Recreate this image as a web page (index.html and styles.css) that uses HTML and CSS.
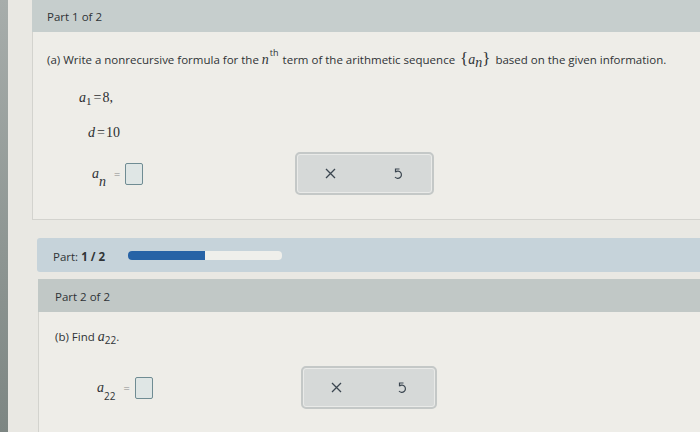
FILE: index.html
```html
<!DOCTYPE html>
<html lang="en">
<head>
    <meta charset="UTF-8">
    <meta name="viewport" content="width=device-width, initial-scale=1.0">
    <title>Arithmetic Sequences</title>
    <link rel="stylesheet" href="styles.css">
</head>
<body>
    <div class="edge"></div>
    <div class="page">

        <!-- Part 1 -->
        <div class="part part-one">
            <div class="part-head">Part 1 of 2</div>
            <div class="part-body">
                <p class="question">
                    (a) Write a nonrecursive formula for the <span class="m">n</span><sup class="th">th</sup> term of the arithmetic sequence
                    <span class="seq"><span class="brace">{</span><span class="m">a</span><sub class="m">n</sub><span class="brace">}</span></span> based on the given information.
                </p>
                <div class="given given-a1"><span class="m">a</span><sub class="num">1</sub><span class="num rel">=</span><span class="num">8,</span></div>
                <div class="given given-d"><span class="m">d</span><span class="num rel">=</span><span class="num">10</span></div>
                <div class="answer-row">
                    <div class="formula formula-an">
                        <span class="m">a</span><sub class="m low">n</sub><span class="eq">=</span><span class="answer-box"></span>
                    </div>
                    <div class="tools">
                        <button class="tool" title="Clear">
                            <svg width="11" height="11" viewBox="0 0 11 11"><path d="M1 1 L10 10 M10 1 L1 10" stroke="#3b4650" stroke-width="1.3" fill="none"/></svg>
                        </button>
                        <button class="tool" title="Undo">
                            <svg width="12" height="13" viewBox="0 0 12 13"><path d="M7.5 2 H3.5 V5.2" stroke="#3b4650" stroke-width="1.2" fill="none"/><path d="M3.5 5 A3.6 3.6 0 1 1 3 10" stroke="#3b4650" stroke-width="1.2" fill="none"/></svg>
                        </button>
                    </div>
                </div>
            </div>
        </div>

        <!-- progress -->
        <div class="progress-row">
            <span class="progress-label">Part: <b>1 / 2</b></span>
            <div class="progress-track"><div class="progress-fill" style="width: 50%"></div></div>
        </div>

        <!-- Part 2 -->
        <div class="part part-two">
            <div class="part-head">Part 2 of 2</div>
            <div class="part-body">
                <p class="question">(b) Find <span class="m">a</span><sub class="num-sans">22</sub>.</p>
                <div class="answer-row">
                    <div class="formula formula-a22">
                        <span class="m">a</span><sub class="num-sans low">22</sub><span class="eq">=</span><span class="answer-box"></span>
                    </div>
                    <div class="tools">
                        <button class="tool" title="Clear">
                            <svg width="11" height="11" viewBox="0 0 11 11"><path d="M1 1 L10 10 M10 1 L1 10" stroke="#3b4650" stroke-width="1.3" fill="none"/></svg>
                        </button>
                        <button class="tool" title="Undo">
                            <svg width="12" height="13" viewBox="0 0 12 13"><path d="M7.5 2 H3.5 V5.2" stroke="#3b4650" stroke-width="1.2" fill="none"/><path d="M3.5 5 A3.6 3.6 0 1 1 3 10" stroke="#3b4650" stroke-width="1.2" fill="none"/></svg>
                        </button>
                    </div>
                </div>
            </div>
        </div>

    </div>
</body>
</html>
```

FILE: styles.css
```css
body {
    margin: 0;
    display: flex;
    height: 432px;
    overflow: hidden;
    font-family: "Open Sans", Arial, sans-serif;
    font-size: 11.5px;
    color: #2f3336;
    background: #e9e8e3;
}
.edge {
    width: 8px;
    flex: none;
    background: linear-gradient(#a7adab, #8d9592 60%, #7d8683);
}
.page {
    flex: 1;
    padding-left: 24px;
    margin-right: -12px;
}
.part-head {
    height: 32px;
    line-height: 34px;
    padding-left: 15px;
}
.part-one .part-head {
    background: #c6cecd;
}
.part-two {
    margin-left: 6px;
    margin-top: 7px;
}
.part-two .part-head {
    height: 33px;
    line-height: 36px;
    padding-left: 17px;
    background: #c1c8c6;
}
.part-body {
    background: #eeede8;
    border-left: 1px solid #d3d3ce;
    border-bottom: 1px solid #d3d3ce;
}
.part-one .part-body {
    padding: 19px 0 24px 14px;
}
.part-two .part-body {
    padding: 16px 0 26px 16px;
}
.question {
    margin: 0;
    line-height: 18px;
    white-space: nowrap;
}

/* math */
.m {
    font-family: "Liberation Serif", "Times New Roman", serif;
    font-style: italic;
    font-size: 14px;
}
sub,
sup {
    line-height: 0;
}
sub {
    font-size: 10px;
    vertical-align: -3px;
}
sub.low {
    vertical-align: -8px;
}
.num {
    font-family: "Liberation Serif", "Times New Roman", serif;
    font-size: 14px;
}
.rel {
    margin: 0 1px 0 2px;
}
sub.num {
    font-size: 11px;
}
.num-sans {
    font-family: "Open Sans", Arial, sans-serif;
    font-size: 10px;
}
.th {
    font-size: 9px;
    vertical-align: 8px;
    margin: 0 1px;
}
.seq {
    margin: 0 2px;
}
.brace {
    font-family: "Liberation Serif", serif;
    font-size: 17px;
    line-height: 0;
}
.given {
    line-height: 20px;
    color: #2c2f31;
}
.given-a1 {
    margin: 19px 0 0 32px;
}
.given-d {
    margin: 15px 0 0 41px;
}
.eq {
    font-family: "Liberation Serif", serif;
    font-size: 11px;
    color: #888;
    margin: 0 5px 0 8px;
}

/* answer row */
.answer-row {
    display: flex;
    align-items: center;
}
.part-one .answer-row {
    margin-top: 9px;
}
.part-two .answer-row {
    margin-top: 20px;
}
.formula {
    line-height: 24px;
}
.formula-an {
    width: 203px;
    padding-left: 45px;
}
.formula-a22 {
    width: 204px;
    padding-left: 42px;
}
.answer-box {
    display: inline-block;
    vertical-align: middle;
    width: 16px;
    height: 20px;
    border: 1.5px solid #6f8c93;
    border-radius: 2px;
    background: #dfe6e5;
}
.tools {
    display: flex;
    width: 135px;
    height: 39px;
    border: 2px solid #c4c8c7;
    border-radius: 5px;
    background: #d6d9d8;
    box-shadow: inset 0 0 0 1px #e9eae8;
}
.part-two .tools {
    width: 132px;
}
.tool {
    flex: 1;
    border: none;
    background: none;
    display: flex;
    align-items: center;
    justify-content: center;
    padding: 0;
}

/* progress */
.progress-row {
    display: flex;
    align-items: center;
    margin: 18px 0 0 5px;
    height: 34px;
    padding-left: 16px;
    border-radius: 3px 0 0 3px;
    background: #c6d3da;
}
.progress-label {
    width: 75px;
    padding-top: 2px;
}
.progress-track {
    width: 154px;
    height: 9px;
    border-radius: 4px;
    background: #efefeb;
    overflow: hidden;
}
.progress-fill {
    height: 100%;
    background: #2763a6;
}
```
